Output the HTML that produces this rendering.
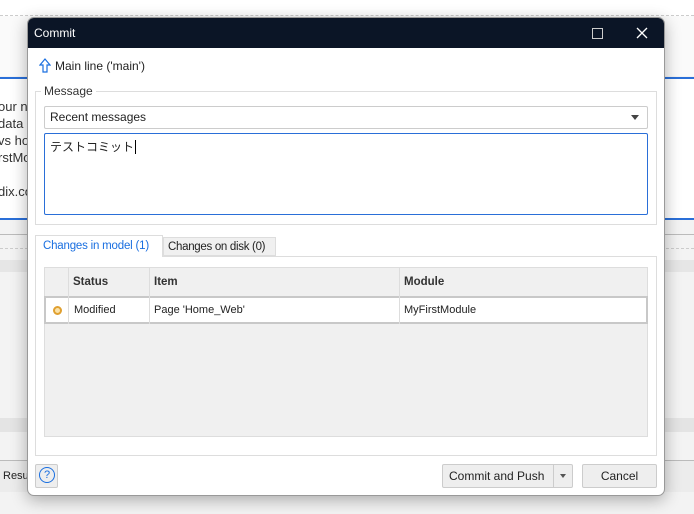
<!DOCTYPE html>
<html><head><meta charset="utf-8"><style>
*{box-sizing:border-box;margin:0;padding:0}
body{width:694px;height:514px;position:relative;overflow:hidden;background:#f3f3f3;font-family:"Liberation Sans","Noto Sans CJK JP",sans-serif;font-size:11px;color:#222}
.a{position:absolute;white-space:nowrap}
</style></head><body>
<div class="a" style="left:0;top:0;width:694px;height:16px;background:#fff;border-bottom:1px dashed #ccc"></div>
<div class="a" style="left:0;top:16px;width:694px;height:60px;background:#fafafa"></div>
<div class="a" style="left:0;top:77px;width:694px;height:2px;background:#2a6fd8"></div>
<div class="a" style="left:0;top:79px;width:694px;height:139px;background:#fff"></div>
<div class="a" style="left:0;top:218px;width:694px;height:2px;background:#2a6fd8"></div>
<div class="a" style="left:0;top:234px;width:694px;height:1px;background:#bbb"></div>
<div class="a" style="left:0;top:248px;width:694px;height:1px;border-top:1px dashed #ccc"></div>
<div class="a" style="left:0;top:260px;width:694px;height:12px;background:#e6e6e6"></div>
<div class="a" style="left:0;top:418px;width:694px;height:14px;background:#e4e4e4"></div>
<div class="a" style="left:0;top:460px;width:694px;height:32px;background:#ececec;border-top:1px solid #bbb"></div>
<div class="a" style="left:3px;top:470px;font-size:11px">Resu</div>
<div class="a" style="left:-2px;top:98px;font-size:13px;line-height:17px;color:#333">our n<br>data<br>vs ho<br>rstMo<br><br>dix.co</div>
<div class="a" style="left:27px;top:17px;width:638px;height:479px;background:#fff;border-radius:7px;box-shadow:0 4px 16px rgba(0,0,0,.3);overflow:hidden;border:1px solid #999">
 <div class="a" style="left:0;top:0;width:638px;height:30px;background:#0b1526;color:#fff;font-size:12px;line-height:30px;padding-left:6px">Commit</div>
 <div class="a" style="left:564px;top:10px;width:11px;height:11px;border:1px solid #ccc"></div>
 <svg class="a" style="left:608px;top:9px" width="12" height="12"><path d="M1 1L11 11M11 1L1 11" stroke="#fff" stroke-width="1.3"/></svg>
</div>
<svg class="a" style="left:39px;top:58px" width="12" height="16"><path d="M6 1L1 7H4V14H8V7H11Z" fill="none" stroke="#1a6fe0" stroke-width="1.2"/></svg>
<div class="a" style="left:55px;top:59px;font-size:12px">Main line ('main')</div>
<div class="a" style="left:35px;top:91px;width:622px;height:134px;border:1px solid #ddd"></div>
<div class="a" style="left:41px;top:84px;background:#fff;padding:0 3px;font-size:12px;color:#333">Message</div>
<div class="a" style="left:44px;top:106px;width:604px;height:23px;border:1px solid #ccc;border-radius:2px;padding-left:5px;line-height:21px;font-size:12px">Recent messages</div>
<svg class="a" style="left:631px;top:115px" width="8" height="5"><path d="M0 0H8L4 5Z" fill="#444"/></svg>
<div class="a" style="left:44px;top:133px;width:604px;height:82px;border:1px solid #2a6fd8;border-radius:2px;padding:4px 5px;font-size:12px">テストコミット<span style="border-left:1px solid #000;margin-left:1px"></span></div>
<div class="a" style="left:35px;top:256px;width:622px;height:200px;border:1px solid #ddd"></div>
<div class="a" style="left:35px;top:235px;width:128px;height:22px;background:#fff;border:1px solid #ddd;border-bottom:none;color:#1a6fe0;font-size:11.5px;padding:4px 0 0 7px;letter-spacing:-0.2px">Changes in model (1)</div>
<div class="a" style="left:163px;top:237px;width:113px;height:19px;background:#f0f0f0;border:1px solid #ddd;font-size:11.5px;padding:3px 0 0 4px;letter-spacing:-0.3px">Changes on disk (0)</div>
<div class="a" style="left:44px;top:267px;width:604px;height:170px;border:1px solid #ddd;background:#f0f0f0"></div>
<div class="a" style="left:45px;top:268px;width:602px;height:28px;font-size:11.5px;font-weight:bold;color:#333">
 <div class="a" style="left:23px;top:0;height:28px;border-left:1px solid #ddd;padding:8px 4px">Status</div>
 <div class="a" style="left:104px;top:0;height:28px;border-left:1px solid #ddd;padding:8px 4px">Item</div>
 <div class="a" style="left:354px;top:0;height:28px;border-left:1px solid #ddd;padding:8px 4px">Module</div>
</div>
<div class="a" style="left:44px;top:296px;width:604px;height:28px;background:#fff;border:2px solid #c8c8c8;font-size:11px">
 <div class="a" style="left:7px;top:8px;width:9px;height:9px;border-radius:50%;border:2px solid #e0a030;background:#fbe2a8"></div>
 <div class="a" style="left:22px;top:-2px;height:28px;border-left:1px solid #ddd;padding:8px 5px">Modified</div>
 <div class="a" style="left:103px;top:-2px;height:28px;border-left:1px solid #ddd;padding:8px 4px">Page 'Home_Web'</div>
 <div class="a" style="left:353px;top:-2px;height:28px;border-left:1px solid #ddd;padding:8px 4px">MyFirstModule</div>
</div>
<div class="a" style="left:35px;top:464px;width:23px;height:24px;background:#eee;border:1px solid #ccc;border-radius:2px"></div>
<div class="a" style="left:39px;top:467px;width:16px;height:16px;border:1.3px solid #1a6fe0;border-radius:50%;color:#1a6fe0;font-size:11px;text-align:center;line-height:14px">?</div>
<div class="a" style="left:442px;top:464px;width:131px;height:24px;background:#eee;border:1px solid #ccc;border-radius:2px;font-size:12px;line-height:22px;padding-left:6px">Commit and Push</div>
<div class="a" style="left:553px;top:465px;width:1px;height:22px;background:#ccc"></div>
<svg class="a" style="left:560px;top:474px" width="6" height="4"><path d="M0 0H6L3 4Z" fill="#555"/></svg>
<div class="a" style="left:582px;top:464px;width:75px;height:24px;background:#eee;border:1px solid #ccc;border-radius:2px;font-size:12px;line-height:22px;text-align:center">Cancel</div>
</body></html>
